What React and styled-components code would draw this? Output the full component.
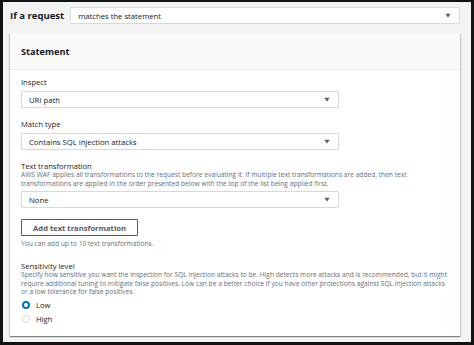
import React, { useState } from 'react';
import styled, { createGlobalStyle } from 'styled-components';

const GlobalStyle = createGlobalStyle`
  html, body {
    margin: 0;
    padding: 0;
    background: #121212;
  }
  body {
    font-family: "Open Sans", "Noto Sans", Arial, sans-serif;
    color: #16191f;
  }
`;

const Select = ({ value, width }) => (
  <SelectBox $width={width}>
    <span>{value}</span>
    <Caret viewBox="0 0 8 6">
      <path d="M0.5 0.5 L7.5 0.5 L4 5.5 Z" fill="#545b64" />
    </Caret>
  </SelectBox>
);

const Field = ({ label, description, children, $offset }) => (
  <FieldWrap $offset={$offset}>
    <Label $tight={!!description}>{label}</Label>
    {description && <Description>{description}</Description>}
    {children}
  </FieldWrap>
);

const App = () => {
  const [level, setLevel] = useState('low');

  return (
    <Frame>
      <GlobalStyle />
      <TopRow>
        <TopLabel>If a request</TopLabel>
        <Select value="matches the statement" />
      </TopRow>

      <Panel>
        <PanelHeader>Statement</PanelHeader>
        <PanelBody>
          <Field label="Inspect">
            <Select value="URI path" width="318px" />
          </Field>
          <Field label="Match type">
            <Select value="Contains SQL injection attacks" width="318px" />
          </Field>
          <Field
            label="Text transformation"
            description="AWS WAF applies all transformations to the request before evaluating it. If multiple text transformations are added, then text transformations are applied in the order presented below with the top of the list being applied first."
          >
            <Select value="None" width="318px" />
          </Field>
          <ButtonGroup>
            <Button>Add text transformation</Button>
            <Hint>You can add up to 10 text transformations.</Hint>
          </ButtonGroup>
          <Field
            $offset="2px"
            label="Sensitivity level"
            description="Specify how sensitive you want the inspection for SQL injection attacks to be. High detects more attacks and is recommended, but it might require additional tuning to mitigate false positives. Low can be a better choice if you have other protections against SQL injection attacks or a low tolerance for false positives."
          >
            <RadioList>
              <RadioRow onClick={() => setLevel('low')}>
                <Radio $checked={level === 'low'} />
                Low
              </RadioRow>
              <RadioRow onClick={() => setLevel('high')}>
                <Radio $checked={level === 'high'} />
                High
              </RadioRow>
            </RadioList>
          </Field>
        </PanelBody>
      </Panel>
    </Frame>
  );
};

export default App;

const Frame = styled.div`
  margin: 2px 3px 0 3px;
  height: 340px;
  box-sizing: border-box;
  background: #f2f3f3;
  padding: 5px 11px 0 7px;
  display: flex;
  flex-direction: column;
  gap: 9px;
`;

const TopRow = styled.div`
  display: flex;
  align-items: center;
  gap: 6px;
`;

const TopLabel = styled.div`
  font-size: 9.5px;
  font-weight: 700;
  white-space: nowrap;
`;

const SelectBox = styled.div`
  box-sizing: border-box;
  flex: ${({ $width }) => ($width ? 'none' : '1')};
  width: ${({ $width }) => $width || 'auto'};
  height: 17px;
  background: #fff;
  border: 1px solid #d5dbdb;
  border-radius: 1px;
  display: flex;
  align-items: center;
  justify-content: space-between;
  padding: 0 8px 0 7px;
  font-size: 7.7px;
  color: #16191f;
`;

const Caret = styled.svg`
  width: 6px;
  height: 5px;
`;

const Panel = styled.div`
  height: 303px;
  box-sizing: border-box;
  background: #fff;
  box-shadow: 0 1px 1px rgba(0, 28, 36, 0.3), 1px 1px 1px rgba(0, 28, 36, 0.15),
    -1px 1px 1px rgba(0, 28, 36, 0.15);
  display: flex;
  flex-direction: column;
`;

const PanelHeader = styled.div`
  height: 37px;
  box-sizing: border-box;
  background: #fafafa;
  border-bottom: 1px solid #eaeded;
  padding: 0 11px;
  display: flex;
  align-items: center;
  font-size: 9.2px;
  font-weight: 700;
`;

const PanelBody = styled.div`
  padding: 7px 11px 0 11px;
  display: flex;
  flex-direction: column;
  gap: 11px;
`;

const FieldWrap = styled.div`
  display: flex;
  flex-direction: column;
  margin-top: ${({ $offset }) => $offset || '0'};
`;

const Label = styled.div`
  font-size: 7.6px;
  line-height: 10px;
  margin-bottom: ${({ $tight }) => ($tight ? '0' : '4px')};
`;

const Description = styled.div`
  font-size: 6.65px;
  line-height: 8.6px;
  color: #687078;
  margin-bottom: 3px;
`;

const ButtonGroup = styled.div`
  display: flex;
  flex-direction: column;
  align-items: flex-start;
  gap: 3px;
`;

const Button = styled.button`
  box-sizing: border-box;
  width: 117px;
  height: 17px;
  background: #fff;
  border: 1px solid #545b64;
  border-radius: 1px;
  font-family: inherit;
  font-size: 7.6px;
  font-weight: 700;
  color: #545b64;
  padding: 0;
  cursor: pointer;
`;

const Hint = styled.div`
  font-size: 6.65px;
  line-height: 9px;
  color: #687078;
`;

const RadioList = styled.div`
  display: flex;
  flex-direction: column;
  gap: 4px;
`;

const RadioRow = styled.label`
  display: flex;
  align-items: center;
  gap: 6px;
  height: 10px;
  font-size: 7.6px;
  padding-left: 1px;
  cursor: pointer;
`;

const Radio = styled.span`
  box-sizing: border-box;
  width: 8px;
  height: 8px;
  border-radius: 50%;
  background: #fff;
  border: ${({ $checked }) => ($checked ? '2.5px solid #0073bb' : '1px solid #d5dbdb')};
`;
